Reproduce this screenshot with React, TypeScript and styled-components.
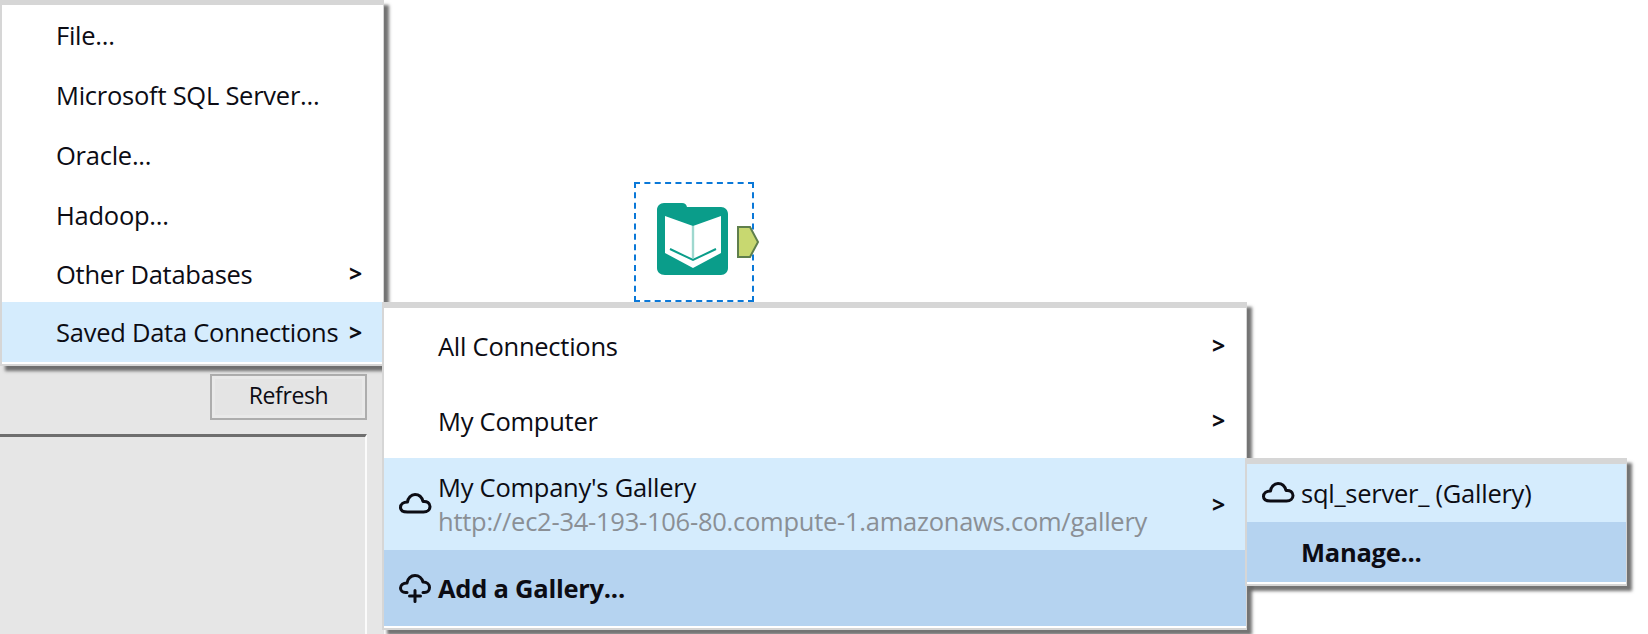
import React from 'react';
import styled, { createGlobalStyle } from 'styled-components';

const GlobalStyle = createGlobalStyle`
  html, body {
    margin: 0;
    padding: 0;
    width: 1648px;
    height: 634px;
    overflow: hidden;
    background: #fff;
    font-family: "Open Sans", "Noto Sans", sans-serif;
    color: #0c0c14;
  }
`;

const Page = styled.div`
  position: relative;
  display: flex;
  width: 1648px;
  height: 634px;
  overflow: hidden;
`;

const SidePane = styled.div`
  box-sizing: border-box;
  width: 384px;
  height: 100%;
  padding: 374px 17px 0 0;
  display: flex;
  flex-direction: column;
  align-items: flex-end;
  gap: 14px;
  background: #e6e6e6;
`;

const RefreshButton = styled.button`
  box-sizing: border-box;
  width: 157px;
  height: 46px;
  padding: 0 0 4px;
  background: #e4e4e4;
  border: 2px solid #adadad;
  outline: 3px solid #e9e9e9;
  outline-offset: -5px;
  font: 400 23px "Open Sans", sans-serif;
  letter-spacing: -0.4px;
  color: #0c0c14;
`;

const ResultPanel = styled.div`
  flex: 1;
  align-self: stretch;
  border-top: 3px solid #6e6e6e;
  border-right: 2px solid #fbfbfb;
  background: #e6e6e6;
`;

const Canvas = styled.div`
  position: relative;
  flex: 1;
  background: #fff;
`;

const ToolNode = styled.div`
  position: absolute;
  left: 250px;
  top: 182px;
  box-sizing: border-box;
  width: 120px;
  height: 120px;
  border: 2px dashed #0a78d8;
`;

const ToolGlyph = styled.svg`
  position: absolute;
  left: 19px;
  top: 17px;
  width: 76px;
  height: 76px;
`;

const OutputAnchor = styled.svg`
  position: absolute;
  left: 100px;
  top: 41px;
  width: 24px;
  height: 34px;
`;

const Menu = styled.div<{ $left: number; $top: number; $width: number; $topBorder: number }>`
  position: absolute;
  left: ${p => p.$left}px;
  top: ${p => p.$top}px;
  box-sizing: border-box;
  width: ${p => p.$width}px;
  padding-bottom: 2px;
  background: #fff;
  border: 2px solid #d6d6d6;
  border-top-width: ${p => p.$topBorder}px;
  border-right-width: 1px;
  box-shadow: 5px 5px 3px rgba(70, 70, 70, 0.75);
`;

const MenuItem = styled.div<{ $height: number; $state?: 'hover' | 'active'; $indent: number }>`
  position: relative;
  display: flex;
  align-items: center;
  box-sizing: border-box;
  height: ${p => p.$height}px;
  padding: 0 21px 0 ${p => p.$indent}px;
  font-size: 25.5px;
  letter-spacing: -0.25px;
  white-space: nowrap;
  font-weight: ${p => (p.$state === 'active' ? 700 : 400)};
  background: ${p =>
    p.$state === 'active' ? '#b5d3f0' : p.$state === 'hover' ? '#d5ecfd' : '#fff'};
`;

const ItemText = styled.div`
  flex: 1;
  display: flex;
  flex-direction: column;
  line-height: 34px;
`;

const ItemUrl = styled.span`
  color: #8a8f95;
`;

const Arrow = styled.span`
  font-size: 23px;
  font-weight: 700;
  line-height: 1;
  color: #0c0c14;
`;

const ItemIcon = styled.svg`
  position: absolute;
  left: 14px;
  top: 50%;
  width: 34px;
  height: 30px;
  transform: translateY(-50%);
  fill: none;
  stroke: #0c0c14;
  stroke-width: 3;
  stroke-linejoin: round;
  stroke-linecap: round;
`;

const cloudPath =
  'M9 23 H25 C29 23 31.5 20.5 31.5 17.5 C31.5 14 28.5 12 24.5 12.5 C23.5 8.5 20.5 5.5 16.5 5.5 C12.5 5.5 9.5 9 9 13 C5 13 2 15 2 18.5 C2 21.5 5 23 9 23 Z';

const CloudIcon = () => (
  <ItemIcon viewBox="0 0 33 30">
    <path d={cloudPath} />
  </ItemIcon>
);

const CloudPlusIcon = () => (
  <ItemIcon viewBox="0 0 33 30">
    <path d="M8.5 19.5 H7 C4 19.5 2 17.5 2 15 C2 12 4.5 10 8.5 10 C9 5.5 12.5 2.5 16.5 2.5 C20.5 2.5 23.5 5.5 24.5 9 C28.5 9 31 11.5 31 14.5 C31 17.5 29 19.5 26 19.5 H24.5" />
    <path d="M16.5 17.5 V28.5 M11 23 H22" />
  </ItemIcon>
);

const App = () => (
  <Page>
    <GlobalStyle />
    <SidePane>
      <RefreshButton>Refresh</RefreshButton>
      <ResultPanel />
    </SidePane>
    <Canvas>
      <ToolNode>
        <ToolGlyph viewBox="0 0 76 76">
          <path
            d="M9 2 H27 C30 2 31 3 32 6 H66 C70 6 73 9 73 13 V67 C73 71 70 74 66 74 H10 C5 74 2 71 2 67 V9 C2 5 5 2 9 2 Z"
            fill="#0a9d8a"
          />
          <path d="M10 15 L38 25 L66 15 V52 L38 67 L10 52 Z" fill="#fff" />
          <path d="M38 25 V57" stroke="#9fd8cf" strokeWidth="2.4" fill="none" />
          <path d="M15 48 L38 59 L61 48" fill="none" stroke="#0a9d8a" strokeWidth="2" />
        </ToolGlyph>
        <OutputAnchor viewBox="0 0 24 34">
          <path
            d="M2 2 H14 L22 17 L14 32 H2 Z"
            fill="#c8d870"
            stroke="#5f7f4c"
            strokeWidth="2"
          />
        </OutputAnchor>
      </ToolNode>
    </Canvas>

    <Menu $left={0} $top={0} $width={384} $topBorder={5}>
      <MenuItem $height={60} $indent={54}><ItemText>File...</ItemText></MenuItem>
      <MenuItem $height={60} $indent={54}><ItemText>Microsoft SQL Server...</ItemText></MenuItem>
      <MenuItem $height={60} $indent={54}><ItemText>Oracle...</ItemText></MenuItem>
      <MenuItem $height={60} $indent={54}><ItemText>Hadoop...</ItemText></MenuItem>
      <MenuItem $height={57} $indent={54}><ItemText>Other Databases</ItemText><Arrow>&gt;</Arrow></MenuItem>
      <MenuItem $height={60} $indent={54} $state="hover"><ItemText>Saved Data Connections</ItemText><Arrow>&gt;</Arrow></MenuItem>
    </Menu>

    <Menu $left={382} $top={302} $width={865} $topBorder={6}>
      <MenuItem $height={75} $indent={54}><ItemText>All Connections</ItemText><Arrow>&gt;</Arrow></MenuItem>
      <MenuItem $height={75} $indent={54}><ItemText>My Computer</ItemText><Arrow>&gt;</Arrow></MenuItem>
      <MenuItem $height={92} $indent={54} $state="hover">
        <CloudIcon />
        <ItemText>
          <span>My Company's Gallery</span>
          <ItemUrl>http://ec2-34-193-106-80.compute-1.amazonaws.com/gallery</ItemUrl>
        </ItemText>
        <Arrow>&gt;</Arrow>
      </MenuItem>
      <MenuItem $height={76} $indent={54} $state="active">
        <CloudPlusIcon />
        <ItemText>Add a Gallery...</ItemText>
      </MenuItem>
    </Menu>

    <Menu $left={1245} $top={458} $width={382} $topBorder={6}>
      <MenuItem $height={58} $indent={54} $state="hover">
        <CloudIcon />
        <ItemText>sql_server_ (Gallery)</ItemText>
      </MenuItem>
      <MenuItem $height={60} $indent={54} $state="active">
        <ItemText>Manage...</ItemText>
      </MenuItem>
    </Menu>
  </Page>
);

export default App;
